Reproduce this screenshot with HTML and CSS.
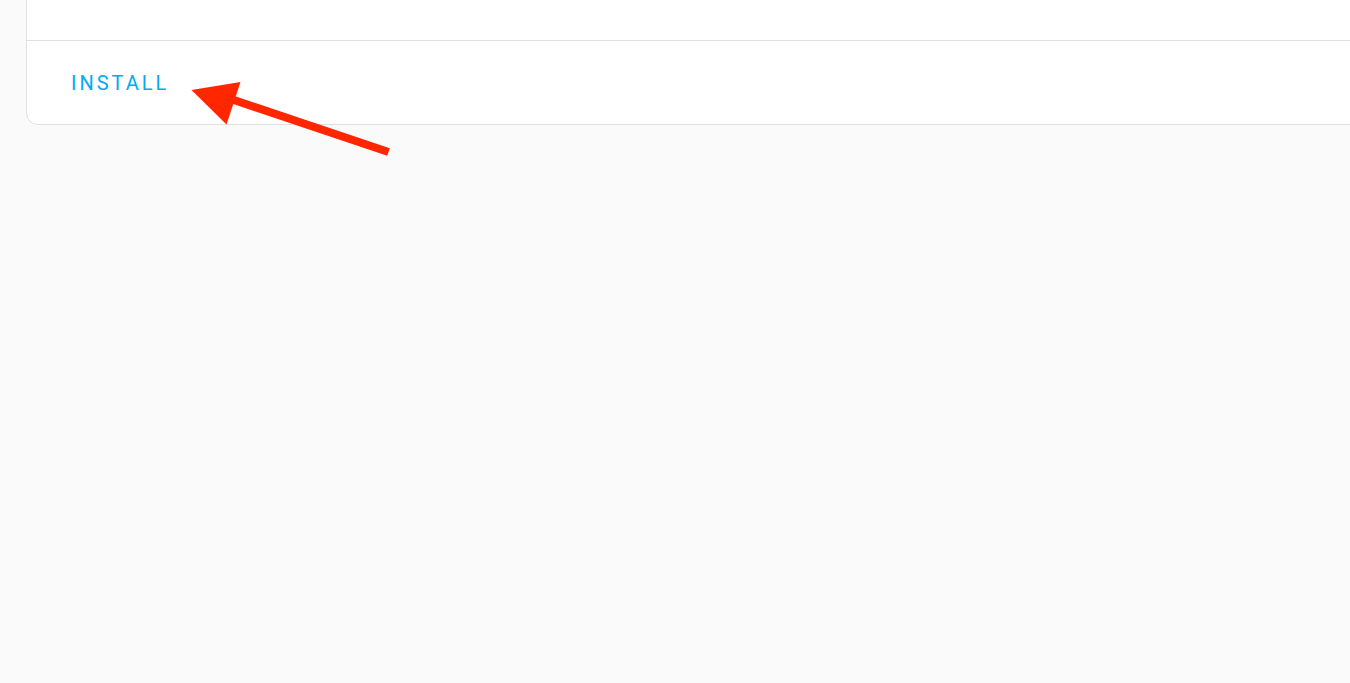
FILE: index.html
```html
<!DOCTYPE html>
<html lang="en">
<head>
<meta charset="utf-8">
<title>Install</title>
<link rel="stylesheet" href="styles.css">
</head>
<body>
<div class="page">
  <div class="card">
    <div class="card-content"></div>
    <div class="card-actions">
      <button class="btn-text">INSTALL</button>
    </div>
  </div>
  <svg class="arrow" width="220" height="90" viewBox="185 75 220 90" aria-hidden="true">
    <line x1="388.5" y1="152" x2="228" y2="98" stroke="#ff2600" stroke-width="8"/>
    <polygon points="191.5,90 240.5,82 226.5,124.5" fill="#ff2600"/>
  </svg>
</div>
</body>
</html>
```

FILE: styles.css
```css
html, body {
  margin: 0;
  padding: 0;
  background: #fafafa;
  font-family: Roboto, "Noto Sans", sans-serif;
  overflow: hidden;
}

.page {
  position: relative;
  display: flow-root;
  width: 1350px;
  height: 683px;
}

.card {
  margin: -30px -40px 0 26px;
  background: #ffffff;
  border: 1px solid #e0e0e0;
  border-radius: 12px;
}

.card-content {
  height: 69px;
}

.card-actions {
  border-top: 1px solid #e0e0e0;
  padding: 32px 0 31px 44px;
}

.btn-text {
  display: block;
  margin: 0;
  padding: 0;
  border: 0;
  background: none;
  font-family: Roboto, "Noto Sans", sans-serif;
  font-size: 20px;
  font-weight: 400;
  line-height: 20px;
  letter-spacing: 3px;
  color: #03a9f4;
}

.arrow {
  position: absolute;
  left: 185px;
  top: 75px;
}
```
